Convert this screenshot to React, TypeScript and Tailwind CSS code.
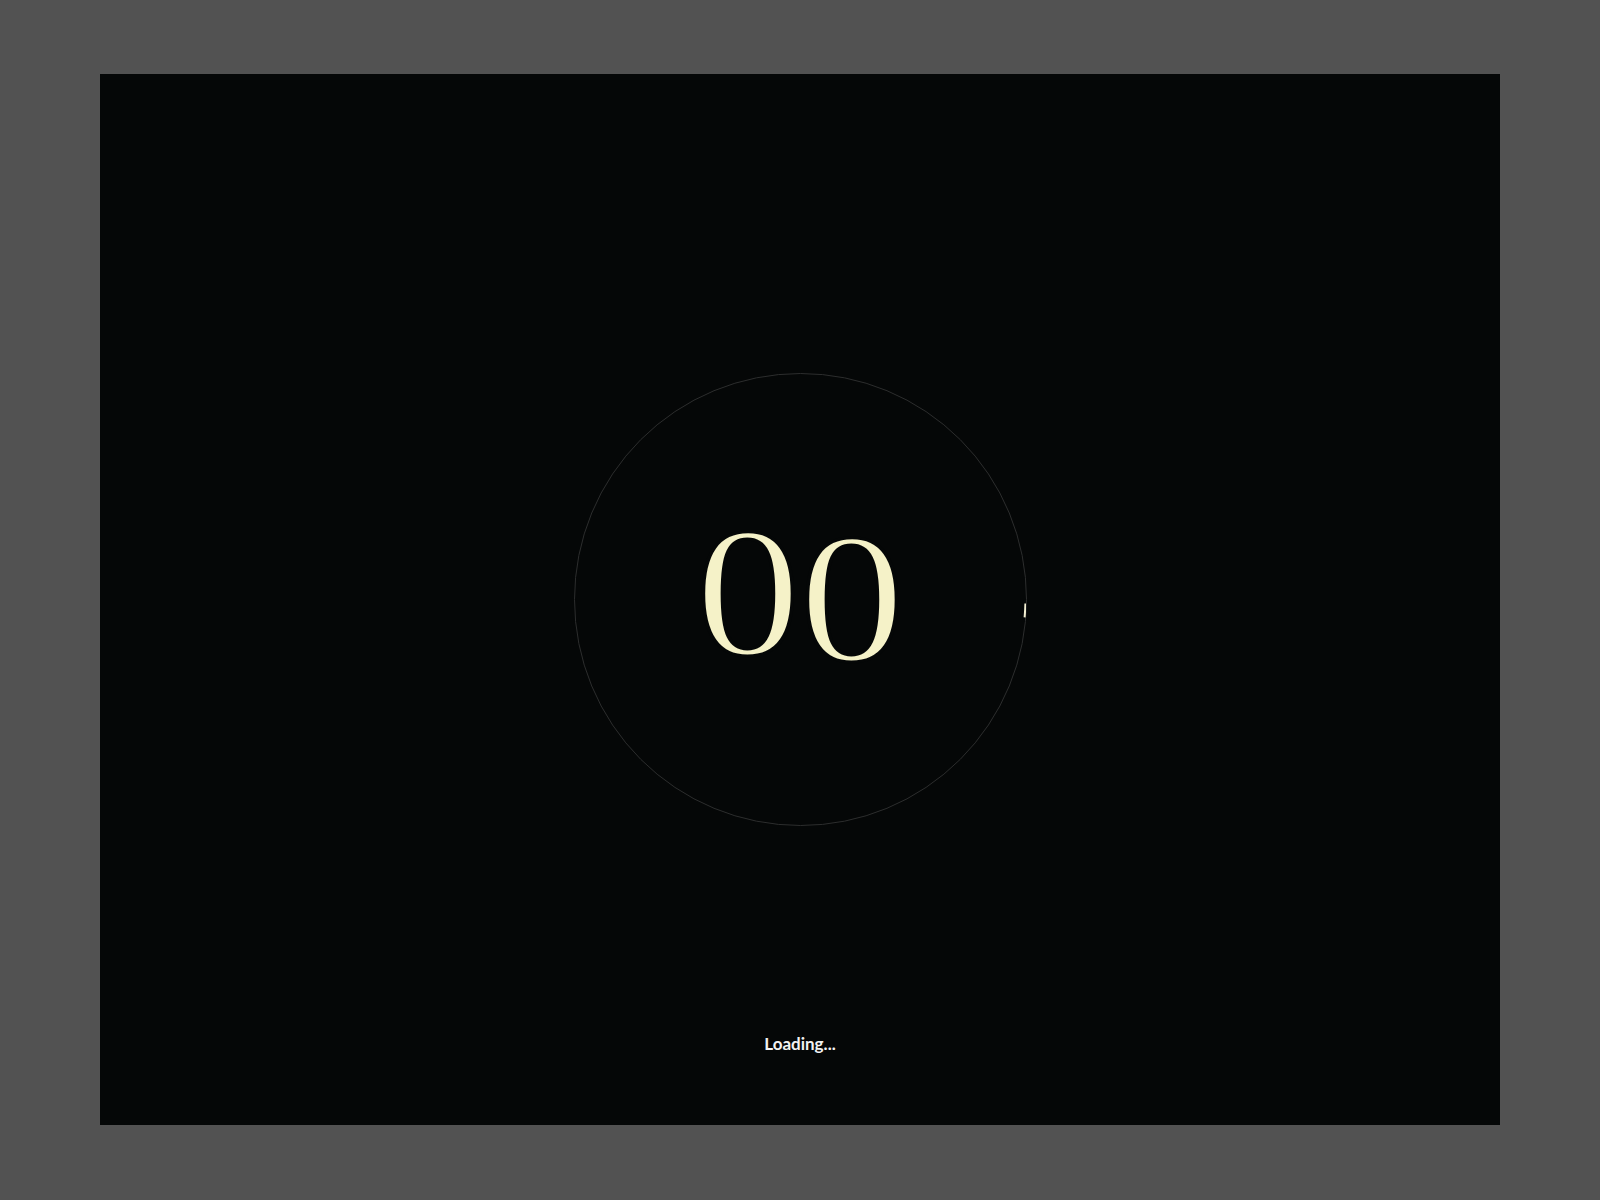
import React from "react";

const digits = ["0", "0"];

export default function App() {
  return (
    <div className="min-h-screen w-full bg-[#525252] px-[100px] pt-[74px] pb-[75px]">
      <div className="flex h-[1051px] w-[1400px] flex-col items-center bg-[#050707] pt-[299px]">
        {/* countdown ring */}
        <div className="relative flex h-[453px] w-[453px] items-center justify-center rounded-full border border-[#2c2d2d]">
          <svg
            className="absolute inset-0 h-full w-full"
            viewBox="0 0 453 453"
            fill="none"
          >
            <path
              d="M 452.4 230.5 A 226.5 226.5 0 0 1 451.6 244.5"
              stroke="#f3efd2"
              strokeWidth="2"
            />
          </svg>
          <div
            className="flex -translate-y-[5px] gap-[12px] text-[184px] leading-none text-[#f5f2c8] [-webkit-text-stroke:3px_#050707]"
            style={{ fontFamily: '"Liberation Serif", "DejaVu Serif", serif' }}
          >
            {digits.map((d, i) => (
              <span
                key={i}
                className={
                  i === 0
                    ? "inline-block -translate-y-[3px] scale-x-[1.14]"
                    : "inline-block translate-y-[3px] scale-x-[1.14]"
                }
              >
                {d}
              </span>
            ))}
          </div>
        </div>

        <p
          className="mt-[206px] text-[17px] font-bold leading-6 text-[#f2f2f2]"
          style={{ fontFamily: 'Lato, "Open Sans", sans-serif' }}
        >
          Loading...
        </p>
      </div>
    </div>
  );
}
